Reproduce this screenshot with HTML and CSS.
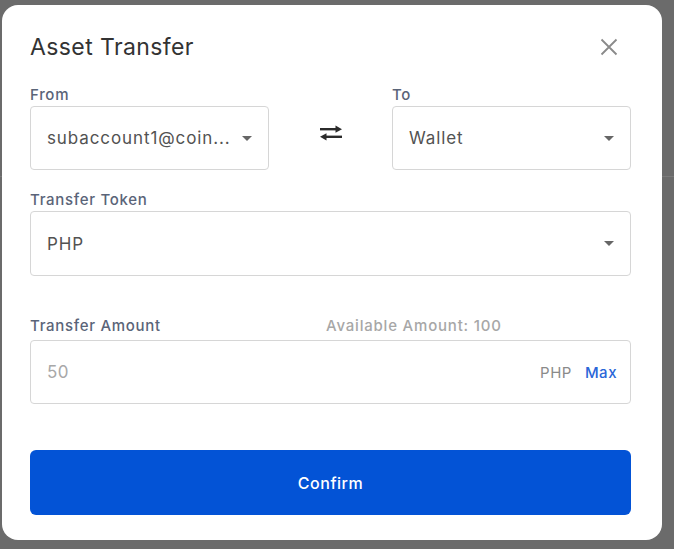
FILE: index.html
```html
<!DOCTYPE html>
<html lang="en">
<head>
<meta charset="utf-8">
<title>Asset Transfer</title>
<link rel="stylesheet" href="styles.css">
</head>
<body>
<div class="backdrop">
  <div class="modal">
    <div class="header">
      <h1 class="title">Asset Transfer</h1>
      <button class="close" aria-label="Close">
        <svg width="18" height="18" viewBox="0 0 18 18"><path d="M1.5 1.5L16.5 16.5M16.5 1.5L1.5 16.5" stroke="#8a8a8a" stroke-width="1.8" fill="none"/></svg>
      </button>
    </div>

    <div class="row-fromto">
      <div class="field">
        <div class="label">From</div>
        <div class="select">
          <span class="value">subaccount1@coin...</span>
          <span class="caret"></span>
        </div>
      </div>
      <div class="swap">
        <svg width="24" height="16" viewBox="0 0 24 16"><path d="M1 4.2H18" stroke="#2b2b2b" stroke-width="2.4"/><polygon points="16.5,0.6 23,4.2 16.5,7.8" fill="#2b2b2b"/><path d="M6 11.8H23" stroke="#2b2b2b" stroke-width="2.4"/><polygon points="7.5,8.2 1,11.8 7.5,15.4" fill="#2b2b2b"/></svg>
      </div>
      <div class="field">
        <div class="label">To</div>
        <div class="select">
          <span class="value">Wallet</span>
          <span class="caret"></span>
        </div>
      </div>
    </div>

    <div class="field token">
      <div class="label">Transfer Token</div>
      <div class="select">
        <span class="value">PHP</span>
        <span class="caret"></span>
      </div>
    </div>

    <div class="field amount">
      <div class="label-row">
        <span class="label">Transfer Amount</span>
        <span class="available">Available Amount: 100</span>
      </div>
      <div class="select input">
        <span class="placeholder">50</span>
        <span class="suffix"><span class="unit">PHP</span><span class="max">Max</span></span>
      </div>
    </div>

    <button class="confirm">Confirm</button>
  </div>
</div>
</body>
</html>
```

FILE: styles.css
```css
html, body {
  margin: 0;
  padding: 0;
}
body {
  background:
    linear-gradient(to bottom, transparent 176px, #7a7a7a 176px, #7a7a7a 177px, transparent 177px),
    #6b6b6b;
  font-family: Inter, "Liberation Sans", Arial, sans-serif;
  width: 674px;
  height: 549px;
  overflow: hidden;
}
.backdrop {
  padding: 5px 0 0 2px;
}
.modal {
  box-sizing: border-box;
  width: 660px;
  height: 535px;
  background: #ffffff;
  border-radius: 16px;
  padding: 26px 31px 25px 28px;
  display: flex;
  flex-direction: column;
}
.header {
  display: flex;
  align-items: center;
  justify-content: space-between;
  height: 32px;
}
.title {
  margin: 0;
  font-size: 23px;
  font-weight: 400;
  color: #333333;
  letter-spacing: 0.4px;
}
.close {
  border: 0;
  background: none;
  padding: 0;
  margin-right: 13px;
  width: 18px;
  height: 18px;
  display: flex;
}
.row-fromto {
  display: flex;
  align-items: flex-start;
  margin-top: 23px;
}
.row-fromto .field {
  width: 239px;
}
.swap {
  flex: 1;
  display: flex;
  justify-content: center;
  padding-top: 39px;
}
.label {
  font-size: 15px;
  line-height: 18px;
  color: #5a6478;
  font-weight: 500;
  letter-spacing: 0.7px;
}
.select {
  box-sizing: border-box;
  margin-top: 2px;
  height: 64px;
  border: 1px solid #d6d6d6;
  border-radius: 4px;
  display: flex;
  align-items: center;
  justify-content: space-between;
  padding: 0 16px 0 16px;
}
.value {
  font-size: 17px;
  color: #525252;
  letter-spacing: 0.9px;
}
.caret {
  width: 0;
  height: 0;
  border-left: 5px solid transparent;
  border-right: 5px solid transparent;
  border-top: 5px solid #666;
}
.token {
  margin-top: 21px;
}
.token .select {
  height: 65px;
}
.amount {
  margin-top: 41px;
}
.label-row {
  display: flex;
  align-items: center;
}
.label-row .label {
  width: 296px;
}
.available {
  font-size: 15px;
  line-height: 18px;
  color: #a7a7a7;
  font-weight: 500;
  letter-spacing: 0.8px;
}
.input {
  margin-top: 5px;
  padding-right: 13px;
}
.placeholder {
  font-size: 17px;
  color: #a8a8a8;
  letter-spacing: 0.5px;
}
.suffix {
  display: flex;
  align-items: center;
  gap: 13px;
  font-size: 15px;
  letter-spacing: 0.5px;
}
.unit {
  color: #8a8a8a;
}
.max {
  color: #2a66d8;
  font-weight: 500;
}
.confirm {
  margin-top: 46px;
  height: 65px;
  border: 0;
  border-radius: 6px;
  background: #0353d6;
  color: #ffffff;
  font-family: inherit;
  font-size: 16px;
  font-weight: 500;
  letter-spacing: 0.5px;
}
```
